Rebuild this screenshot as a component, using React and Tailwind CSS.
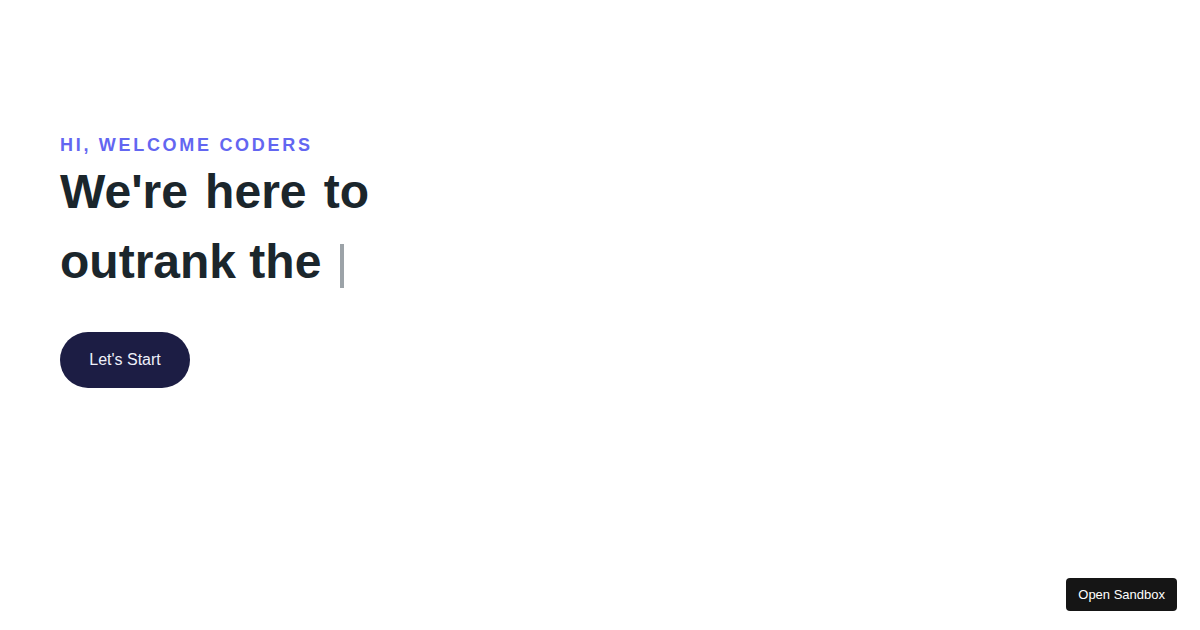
export default function App() {
  return (
    <div className="relative w-full h-[630px] bg-white overflow-hidden" style={{ fontFamily: '"Liberation Sans", Arial, sans-serif' }}>
      <div className="pl-[60px] pt-[134px]">
        <div className="text-[18px] leading-[22px] font-bold tracking-[0.15em] text-[#6366f1] uppercase">
          Hi, welcome coders
        </div>
        <h1 className="mt-[1px] w-[309px] text-justify text-[48px] leading-[70px] font-bold text-[#1b262c]">
          We're here to outrank the{' '}
          <span className="inline-block align-[-10px] ml-[5px] w-[4px] h-[44px] bg-[#9ca3a8]"></span>
        </h1>
        <button className="mt-[35px] w-[130px] h-[56px] rounded-full bg-[#1c1d44] text-[#eef0fa] text-[16px]">
          Let's Start
        </button>
      </div>
      <button className="absolute right-[23px] bottom-[19px] h-[33px] px-[12px] rounded-[4px] bg-[#151515] text-white text-[13px]">
        Open Sandbox
      </button>
    </div>
  )
}
